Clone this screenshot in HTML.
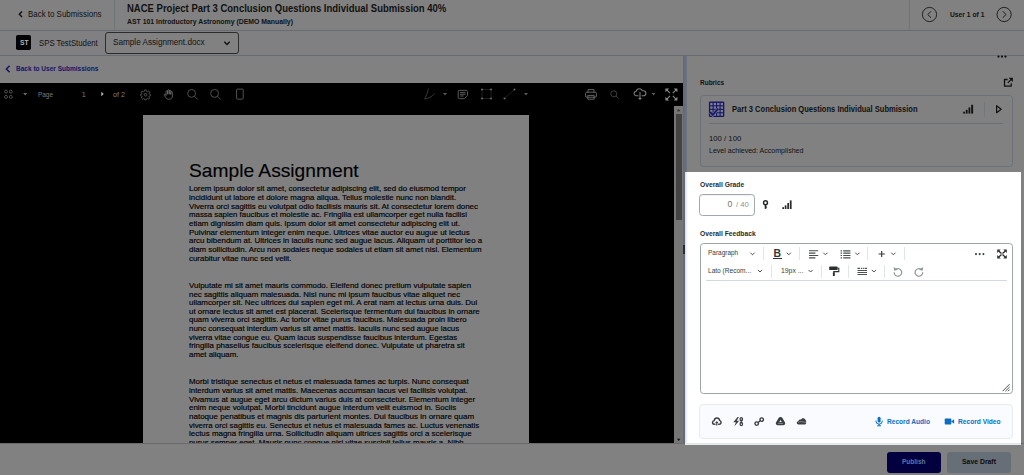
<!DOCTYPE html>
<html><head><meta charset="utf-8"><title>Assignment Evaluation</title>
<style>
html,body{margin:0;padding:0}
body{width:1024px;height:475px;overflow:hidden;position:relative;background:#818181;font-family:"Liberation Sans",sans-serif}
.r{position:absolute;display:block}
.t{position:absolute;white-space:nowrap;line-height:1;display:block;transform-origin:0 0}
</style></head><body>
<div class="r" style="left:0px;top:0px;width:1024px;height:30px;background:#818181"></div>
<div class="r" style="left:0px;top:30px;width:1024px;height:1px;background:#676c73"></div>
<div class="r" style="left:114px;top:0px;width:1px;height:30px;background:#71757a"></div>
<div class="r" style="left:909px;top:0px;width:1px;height:30px;background:#71757a"></div>
<svg class="r" style="left:18px;top:10px;" width="6" height="9" viewBox="0 0 6 9"><g transform="translate(0.000,0.800) scale(1.0000,1.0000)"><path d="M4 0.7 L1.3 3.5 L4 6.3" fill="none" stroke="#111" stroke-width="1.4"/></g></svg>
<span class="t" style="left:28.30px;top:9.10px;font-size:9.5px;transform:scaleX(0.8336);color:#111112;">Back to Submissions</span>
<span class="t" style="left:127.20px;top:3.85px;font-size:10px;transform:scaleX(0.9498);color:#111112;font-weight:700;">NACE Project Part 3 Conclusion Questions Individual Submission 40%</span>
<span class="t" style="left:127.20px;top:18.50px;font-size:6.7px;transform:scaleX(1.0285);color:#111112;font-weight:700;">AST 101 Introductory Astronomy (DEMO Manually)</span>
<svg class="r" style="left:921px;top:6px;" width="18" height="18" viewBox="0 0 18 18"><g transform="translate(0.500,0.500) scale(1.0000,1.0000)"><circle cx="8" cy="8" r="7.1" fill="none" stroke="#1c1c1c" stroke-width="0.95"/><path d="M9.5 4.8 L6.3 8 L9.5 11.2" fill="none" stroke="#1a1a1a" stroke-width="1.0"/></g></svg>
<svg class="r" style="left:996px;top:6px;" width="18" height="18" viewBox="0 0 18 18"><g transform="translate(0.100,0.500) scale(1.0000,1.0000)"><circle cx="8" cy="8" r="7.1" fill="none" stroke="#1c1c1c" stroke-width="0.95"/><path d="M6.7 4.8 L9.9 8 L6.7 11.2" fill="none" stroke="#1a1a1a" stroke-width="1.0"/></g></svg>
<span class="t" style="left:949.80px;top:11.80px;font-size:7.1px;transform:scaleX(0.9475);color:#111112;font-weight:700;">User 1 of 1</span>
<div class="r" style="left:0px;top:31px;width:1024px;height:24px;background:#808082"></div>
<div class="r" style="left:0px;top:55px;width:1024px;height:1px;background:#676c73"></div>
<div class="r" style="left:16px;top:35.2px;width:15.100000000000001px;height:15.0px;background:#030305;border-radius:1.8px"></div>
<span class="t" style="left:19.50px;top:39.05px;font-size:7.6px;transform:scaleX(0.8752);color:#b4b4b4;font-weight:700;">ST</span>
<span class="t" style="left:38.80px;top:38.75px;font-size:9.2px;transform:scaleX(0.8474);color:#111112;">SPS TestStudent</span>
<div class="r" style="left:104.9px;top:32.2px;width:133.7px;height:21.4px;box-sizing:border-box;border:1px solid #2b2c2e;border-radius:3px;background:#818181"></div>
<span class="t" style="left:113.10px;top:38.15px;font-size:8.4px;transform:scaleX(0.9744);color:#111112;">Sample Assignment.docx</span>
<svg class="r" style="left:223px;top:40px;" width="9" height="8" viewBox="0 0 9 8"><g transform="translate(0.000,0.200) scale(1.0000,1.0000)"><path d="M1.3 1.6 L4 4.3 L6.7 1.6" fill="none" stroke="#111" stroke-width="1.4"/></g></svg>
<div class="r" style="left:0px;top:56px;width:683px;height:27px;background:#818181"></div>
<svg class="r" style="left:5px;top:65px;" width="7" height="9" viewBox="0 0 7 9"><g transform="translate(0.000,0.000) scale(1.0000,1.0000)"><path d="M4.6 0.8 L1.4 4 L4.6 7.2" fill="none" stroke="#14146a" stroke-width="1.5"/></g></svg>
<span class="t" style="left:15.80px;top:65.20px;font-size:7.3px;transform:scaleX(0.8937);color:#14146a;font-weight:700;">Back to User Submissions</span>
<div class="r" style="left:0px;top:83px;width:683px;height:361px;background:#000"></div>
<div class="r" style="left:143px;top:115px;width:386px;height:329px;background:#808080"></div>
<svg class="r" style="left:4px;top:89px;" width="10" height="12" viewBox="0 0 10 12"><g transform="translate(0.000,0.300) scale(1.0000,1.0000)"><g fill="none" stroke="#666" stroke-width="0.75"><circle cx="2" cy="2.3" r="1.5"/><circle cx="6.8" cy="2.3" r="1.5"/><circle cx="2" cy="7.6" r="1.5"/><circle cx="6.8" cy="7.6" r="1.5"/></g></g></svg>
<svg class="r" style="left:23px;top:92px;" width="6" height="5" viewBox="0 0 6 5"><g transform="translate(0.200,0.800) scale(1.0000,1.0000)"><path d="M0 0.3 H4 L2 2.6 Z" fill="#6e6e6e"/></g></svg>
<span class="t" style="left:38.30px;top:91.25px;font-size:7.2px;transform:scaleX(0.8920);color:#7c7c7c;">Page</span>
<span class="t" style="left:81.70px;top:91.25px;font-size:7.2px;letter-spacing:0.000px;color:#7c7c7c;">1</span>
<svg class="r" style="left:101px;top:91px;" width="4" height="7" viewBox="0 0 4 7"><g transform="translate(0.000,0.500) scale(1.0000,1.0000)"><path d="M0.3 0.3 L2.7 2.5 L0.3 4.7 Z" fill="#b8b8b8"/></g></svg>
<span class="t" style="left:113.30px;top:91.25px;font-size:7.2px;transform:scaleX(0.9909);color:#7c7c7c;">of 2</span>
<svg class="r" style="left:140px;top:89px;" width="12" height="13" viewBox="0 0 12 13"><g transform="translate(0.000,0.200) scale(1.0000,1.0000)"><g fill="none" stroke="#5e5e5e" stroke-width="0.8"><circle cx="5.5" cy="5.5" r="1.3"/><path d="M4.7 0.7 H6.3 L6.6 2 L7.6 2.5 L8.8 1.8 L9.9 3 L9.1 4.1 L9.4 5 L10.6 5.4 V6.4 L9.3 6.8 L8.9 7.8 L9.6 8.9 L8.5 10 L7.4 9.3 L6.5 9.6 L6.2 10.6 H4.8 L4.5 9.6 L3.6 9.3 L2.5 10 L1.4 8.9 L2.1 7.8 L1.7 6.8 L0.4 6.4 V5.4 L1.6 5 L1.9 4.1 L1.1 3 L2.2 1.8 L3.4 2.5 L4.4 2 Z"/></g></g></svg>
<svg class="r" style="left:163px;top:89px;" width="12" height="12" viewBox="0 0 12 12"><g transform="translate(0.000,0.000) scale(1.0000,1.0000)"><g fill="none" stroke="#6e6e6e" stroke-width="0.8" stroke-linecap="round" stroke-linejoin="round"><path d="M3 6.2 V2.6 a0.8 0.8 0 0 1 1.6 0 V5 M4.6 4.8 V1.6 a0.8 0.8 0 0 1 1.6 0 V5 M6.2 4.8 V2 a0.8 0.8 0 0 1 1.6 0 V5.2 M7.8 5 V3.2 a0.8 0.8 0 0 1 1.6 0 V7 c0 2 -1.2 3.2 -3 3.2 H5.4 C4 10.2 3.4 9.4 2.6 8.2 L1.2 6.2 c-0.4 -0.8 0.6 -1.4 1.2 -0.8 L3 6.2"/></g></g></svg>
<svg class="r" style="left:187px;top:88px;" width="12" height="13" viewBox="0 0 12 13"><g transform="translate(0.000,0.800) scale(1.0000,1.0000)"><g fill="none" stroke="#5c5c5c" stroke-width="0.85"><circle cx="4.6" cy="4.6" r="3.95"/><path d="M7.5 7.5 L10.7 10.7"/></g></g></svg>
<svg class="r" style="left:210px;top:88px;" width="12" height="13" viewBox="0 0 12 13"><g transform="translate(0.000,0.800) scale(1.0000,1.0000)"><g fill="none" stroke="#5c5c5c" stroke-width="0.85"><circle cx="4.6" cy="4.6" r="3.95"/><path d="M7.5 7.5 L10.7 10.7"/></g></g></svg>
<svg class="r" style="left:236px;top:88px;" width="9" height="13" viewBox="0 0 9 13"><g transform="translate(0.000,0.500) scale(1.0000,1.0000)"><rect x="0.6" y="0.6" width="6.6" height="10" rx="0.8" fill="none" stroke="#5a5a5a" stroke-width="0.9"/></g></svg>
<svg class="r" style="left:424px;top:88px;" width="13" height="13" viewBox="0 0 13 13"><g transform="translate(0.000,0.000) scale(1.0000,1.0000)"><path d="M4.6 0.6 C3.6 4.4 2.4 7.6 0.6 11 C4.4 10.6 8 8.8 10.6 5.6" fill="none" stroke="#4a4a4a" stroke-width="0.7"/></g></svg>
<svg class="r" style="left:443px;top:92px;" width="5" height="5" viewBox="0 0 5 5"><g transform="translate(0.000,0.800) scale(1.0000,1.0000)"><path d="M0 0.3 H4 L2 2.6 Z" fill="#5a5a5a"/></g></svg>
<svg class="r" style="left:457px;top:89px;" width="13" height="12" viewBox="0 0 13 12"><g transform="translate(0.800,0.800) scale(0.9455,0.9400)"><g fill="none" stroke="#666" stroke-width="0.95"><path d="M1.6 0.6 H9 a1.2 1.2 0 0 1 1.2 1.2 V6 L7 9.4 H1.6 a1.2 1.2 0 0 1 -1.2 -1.2 V1.8 a1.2 1.2 0 0 1 1.2 -1.2 Z"/><path d="M2.4 3 H8.2 M2.4 4.8 H8.2 M2.4 6.6 H6"/></g></g></svg>
<svg class="r" style="left:481px;top:88px;" width="12" height="13" viewBox="0 0 12 13"><g transform="translate(0.000,0.500) scale(1.0000,1.0000)"><rect x="1" y="1" width="9" height="9" fill="none" stroke="#404040" stroke-width="0.5"/><g fill="#7a7a7a"><rect x="0.2" y="0.2" width="1.6" height="1.6"/><rect x="9.2" y="0.2" width="1.6" height="1.6"/><rect x="0.2" y="9.2" width="1.6" height="1.6"/><rect x="9.2" y="9.2" width="1.6" height="1.6"/></g></g></svg>
<svg class="r" style="left:503px;top:88px;" width="14" height="13" viewBox="0 0 14 13"><g transform="translate(0.500,0.500) scale(1.0000,1.0000)"><path d="M1 10 L11 1" stroke="#424242" stroke-width="0.5"/><g fill="#7a7a7a"><rect x="0.2" y="9.2" width="1.6" height="1.6"/><rect x="10.2" y="0.2" width="1.6" height="1.6"/></g></g></svg>
<svg class="r" style="left:524px;top:92px;" width="5" height="5" viewBox="0 0 5 5"><g transform="translate(0.000,0.800) scale(1.0000,1.0000)"><path d="M0 0.3 H4 L2 2.6 Z" fill="#5a5a5a"/></g></svg>
<svg class="r" style="left:585px;top:88px;" width="13" height="13" viewBox="0 0 13 13"><g transform="translate(0.000,0.800) scale(1.0000,1.0000)"><g fill="none" stroke="#6e6e6e" stroke-width="0.9" stroke-linejoin="round"><path d="M3 3.4 V0.8 H9 V3.4"/><rect x="0.6" y="3.4" width="10.8" height="5" rx="1.2"/><rect x="2.8" y="6.6" width="6.4" height="3.8" fill="#000"/><path d="M2.8 8.4 H9.2"/></g></g></svg>
<svg class="r" style="left:610px;top:90px;" width="10" height="10" viewBox="0 0 10 10"><g transform="translate(0.300,0.300) scale(0.7636,0.7636)"><g fill="none" stroke="#4e4e4e" stroke-width="1.0"><circle cx="4.6" cy="4.6" r="3.95"/><path d="M7.5 7.5 L10.7 10.7"/></g></g></svg>
<svg class="r" style="left:633px;top:88px;" width="15" height="14" viewBox="0 0 15 14"><g transform="translate(0.500,0.200) scale(1.0000,1.0000)"><g fill="none" stroke="#7a7a7a" stroke-width="1.1" stroke-linecap="round" stroke-linejoin="round"><path d="M4.6 7.6 H3.4 C1.6 7.6 0.6 6.4 0.6 5.2 C0.6 3.9 1.6 3 2.8 3 C3 1.6 4.3 0.6 5.9 0.6 C7.3 0.6 8.4 1.4 8.9 2.6 C9.2 2.5 9.5 2.5 9.8 2.5 C11.3 2.5 12.4 3.6 12.4 5 C12.4 6.5 11.3 7.6 9.8 7.6 H8.5"/><path d="M6.5 4.4 V9.8"/></g><path d="M4.4 9.7 H8.6 L6.5 11.9 Z" fill="#7a7a7a"/></g></svg>
<svg class="r" style="left:651px;top:92px;" width="6" height="5" viewBox="0 0 6 5"><g transform="translate(0.500,0.800) scale(1.0000,1.0000)"><path d="M0 0.3 H4 L2 2.6 Z" fill="#5a5a5a"/></g></svg>
<svg class="r" style="left:665px;top:88px;" width="14" height="14" viewBox="0 0 14 14"><g transform="translate(0.200,0.300) scale(1.0333,1.0333)"><g stroke="#8c8c8c" stroke-width="1.0"><path d="M4.6 4.6 L1.6 1.6 M7.4 4.6 L10.4 1.6 M4.6 7.4 L1.6 10.4 M7.4 7.4 L10.4 10.4"/></g><g fill="#8c8c8c"><path d="M0.2 0.2 H3.8 L0.2 3.8 Z M11.8 0.2 H8.2 L11.8 3.8 Z M0.2 11.8 H3.8 L0.2 8.2 Z M11.8 11.8 H8.2 L11.8 8.2 Z"/></g></g></svg>
<div class="r" style="left:674.3px;top:106.3px;width:8.700000000000045px;height:337.7px;background:#767676"></div>
<div class="r" style="left:675.8px;top:114.1px;width:6.100000000000023px;height:105.5px;background:#434343"></div>
<svg class="r" style="left:676px;top:108px;" width="6" height="5" viewBox="0 0 6 5"><g transform="translate(0.800,0.800) scale(1.0000,1.0000)"><path d="M0 2.5 L1.8 0.1 L3.6 2.5 Z" fill="#2e2e2e"/></g></svg>
<svg class="r" style="left:677px;top:438px;" width="5" height="4" viewBox="0 0 5 4"><g transform="translate(0.000,0.600) scale(1.0000,1.0000)"><path d="M0 0.1 L1.7 2.3 L3.4 0.1 Z" fill="#101010"/></g></svg>
<span class="t" style="left:189.20px;top:161.55px;font-size:18.6px;transform:scaleX(1.0323);color:#000;-webkit-text-stroke:0.15px #000;">Sample Assignment</span>
<span class="t" style="left:189.00px;top:184.90px;font-size:7.9px;transform:scaleX(1.0005);color:#000;-webkit-text-stroke:0.16px #000;">Lorem ipsum dolor sit amet, consectetur adipiscing elit, sed do eiusmod tempor</span>
<span class="t" style="left:189.00px;top:193.90px;font-size:7.9px;transform:scaleX(1.0003);color:#000;-webkit-text-stroke:0.16px #000;">incididunt ut labore et dolore magna aliqua. Tellus molestie nunc non blandit.</span>
<span class="t" style="left:189.00px;top:202.90px;font-size:7.9px;transform:scaleX(1.0034);color:#000;-webkit-text-stroke:0.16px #000;">Viverra orci sagittis eu volutpat odio facilisis mauris sit. At consectetur lorem donec</span>
<span class="t" style="left:189.00px;top:210.90px;font-size:7.9px;transform:scaleX(0.9950);color:#000;-webkit-text-stroke:0.16px #000;">massa sapien faucibus et molestie ac. Fringilla est ullamcorper eget nulla facilisi</span>
<span class="t" style="left:189.00px;top:219.90px;font-size:7.9px;transform:scaleX(1.0063);color:#000;-webkit-text-stroke:0.16px #000;">etiam dignissim diam quis. Ipsum dolor sit amet consectetur adipiscing elit ut.</span>
<span class="t" style="left:189.00px;top:228.90px;font-size:7.9px;transform:scaleX(1.0030);color:#000;-webkit-text-stroke:0.16px #000;">Pulvinar elementum integer enim neque. Ultrices vitae auctor eu augue ut lectus</span>
<span class="t" style="left:189.00px;top:236.90px;font-size:7.9px;transform:scaleX(1.0024);color:#000;-webkit-text-stroke:0.16px #000;">arcu bibendum at. Ultrices in iaculis nunc sed augue lacus. Aliquam ut porttitor leo a</span>
<span class="t" style="left:189.00px;top:245.90px;font-size:7.9px;transform:scaleX(0.9997);color:#000;-webkit-text-stroke:0.16px #000;">diam sollicitudin. Arcu non sodales neque sodales ut etiam sit amet nisl. Elementum</span>
<span class="t" style="left:189.00px;top:254.90px;font-size:7.9px;transform:scaleX(1.0028);color:#000;-webkit-text-stroke:0.16px #000;">curabitur vitae nunc sed velit.</span>
<span class="t" style="left:189.00px;top:281.90px;font-size:7.9px;transform:scaleX(1.0047);color:#000;-webkit-text-stroke:0.16px #000;">Vulputate mi sit amet mauris commodo. Eleifend donec pretium vulputate sapien</span>
<span class="t" style="left:189.00px;top:290.90px;font-size:7.9px;transform:scaleX(0.9989);color:#000;-webkit-text-stroke:0.16px #000;">nec sagittis aliquam malesuada. Nisl nunc mi ipsum faucibus vitae aliquet nec</span>
<span class="t" style="left:189.00px;top:298.90px;font-size:7.9px;transform:scaleX(1.0016);color:#000;-webkit-text-stroke:0.16px #000;">ullamcorper sit. Nec ultrices dui sapien eget mi. A erat nam at lectus urna duis. Dui</span>
<span class="t" style="left:189.00px;top:307.90px;font-size:7.9px;transform:scaleX(1.0011);color:#000;-webkit-text-stroke:0.16px #000;">ut ornare lectus sit amet est placerat. Scelerisque fermentum dui faucibus in ornare</span>
<span class="t" style="left:189.00px;top:315.90px;font-size:7.9px;transform:scaleX(1.0002);color:#000;-webkit-text-stroke:0.16px #000;">quam viverra orci sagittis. Ac tortor vitae purus faucibus. Malesuada proin libero</span>
<span class="t" style="left:189.00px;top:324.90px;font-size:7.9px;transform:scaleX(0.9984);color:#000;-webkit-text-stroke:0.16px #000;">nunc consequat interdum varius sit amet mattis. Iaculis nunc sed augue lacus</span>
<span class="t" style="left:189.00px;top:333.90px;font-size:7.9px;transform:scaleX(0.9878);color:#000;-webkit-text-stroke:0.16px #000;">viverra vitae congue eu. Quam lacus suspendisse faucibus interdum. Egestas</span>
<span class="t" style="left:189.00px;top:341.90px;font-size:7.9px;transform:scaleX(1.0002);color:#000;-webkit-text-stroke:0.16px #000;">fringilla phasellus faucibus scelerisque eleifend donec. Vulputate ut pharetra sit</span>
<span class="t" style="left:189.00px;top:350.90px;font-size:7.9px;transform:scaleX(0.9976);color:#000;-webkit-text-stroke:0.16px #000;">amet aliquam.</span>
<span class="t" style="left:189.00px;top:377.90px;font-size:7.9px;transform:scaleX(0.9979);color:#000;-webkit-text-stroke:0.16px #000;">Morbi tristique senectus et netus et malesuada fames ac turpis. Nunc consequat</span>
<span class="t" style="left:189.00px;top:386.90px;font-size:7.9px;transform:scaleX(1.0007);color:#000;-webkit-text-stroke:0.16px #000;">interdum varius sit amet mattis. Maecenas accumsan lacus vel facilisis volutpat.</span>
<span class="t" style="left:189.00px;top:395.90px;font-size:7.9px;transform:scaleX(1.0027);color:#000;-webkit-text-stroke:0.16px #000;">Vivamus at augue eget arcu dictum varius duis at consectetur. Elementum integer</span>
<span class="t" style="left:189.00px;top:403.90px;font-size:7.9px;transform:scaleX(1.0052);color:#000;-webkit-text-stroke:0.16px #000;">enim neque volutpat. Morbi tincidunt augue interdum velit euismod in. Sociis</span>
<span class="t" style="left:189.00px;top:412.90px;font-size:7.9px;transform:scaleX(1.0174);color:#000;-webkit-text-stroke:0.16px #000;">natoque penatibus et magnis dis parturient montes. Dui faucibus in ornare quam</span>
<span class="t" style="left:189.00px;top:421.90px;font-size:7.9px;transform:scaleX(0.9963);color:#000;-webkit-text-stroke:0.16px #000;">viverra orci sagittis eu. Senectus et netus et malesuada fames ac. Luctus venenatis</span>
<span class="t" style="left:189.00px;top:429.90px;font-size:7.9px;transform:scaleX(1.0039);color:#000;-webkit-text-stroke:0.16px #000;">lectus magna fringilla urna. Sollicitudin aliquam ultrices sagittis orci a scelerisque</span>
<span class="t" style="left:189.00px;top:438.90px;font-size:7.9px;transform:scaleX(0.9941);color:#000;-webkit-text-stroke:0.16px #000;">purus semper eget. Mauris nunc congue nisi vitae suscipit tellus mauris a. Nibh</span>
<div class="r" style="left:683px;top:56px;width:4.2000000000000455px;height:388px;background:linear-gradient(90deg,#626976,#6c7280)"></div>
<div class="r" style="left:687.5px;top:56px;width:336.5px;height:388px;background:#818181"></div>
<svg class="r" style="left:997px;top:55px;" width="11" height="5" viewBox="0 0 11 5"><g transform="translate(0.000,0.000) scale(1.0000,1.0000)"><g fill="#101010"><circle cx="1.5" cy="1.6" r="1.15"/><circle cx="5" cy="1.6" r="1.15"/><circle cx="8.5" cy="1.6" r="1.15"/></g></g></svg>
<span class="t" style="left:699.70px;top:79.35px;font-size:7.0px;transform:scaleX(0.9247);color:#111112;font-weight:700;">Rubrics</span>
<svg class="r" style="left:1003px;top:77px;" width="12" height="12" viewBox="0 0 12 12"><g transform="translate(0.600,0.600) scale(1.0000,1.0000)"><g fill="none" stroke="#111" stroke-width="1.3" stroke-linejoin="round"><path d="M4 1.9 H0.9 V8.6 H7.6 V5.6"/><path d="M4.2 5.3 L8.2 1.3"/></g><path d="M5 0.2 H9.3 V4.5 Z" fill="#111"/></g></svg>
<div class="r" style="left:699.5px;top:95.2px;width:313.5px;height:71.89999999999999px;box-sizing:border-box;border:1px solid #6c7178;border-radius:3.5px;background:#818182"></div>
<svg class="r" style="left:708px;top:101px;" width="18" height="17" viewBox="0 0 18 17"><g transform="translate(0.900,0.600) scale(0.9625,0.9625)"><rect x="0" y="0" width="16" height="16" rx="1.3" fill="#15156b"/><g fill="#80808a"><rect x="1.35" y="1.35" width="2.45" height="2.45"/><rect x="1.35" y="4.97" width="2.45" height="2.45"/><rect x="1.35" y="8.59" width="2.45" height="2.45"/><rect x="1.35" y="12.21" width="2.45" height="2.45"/><rect x="4.97" y="1.35" width="2.45" height="2.45"/><rect x="4.97" y="4.97" width="2.45" height="2.45"/><rect x="4.97" y="8.59" width="2.45" height="2.45"/><rect x="4.97" y="12.21" width="2.45" height="2.45"/><rect x="8.59" y="1.35" width="2.45" height="2.45"/><rect x="8.59" y="4.97" width="2.45" height="2.45"/><rect x="8.59" y="8.59" width="2.45" height="2.45"/><rect x="8.59" y="12.21" width="2.45" height="2.45"/><rect x="12.21" y="1.35" width="2.45" height="2.45"/><rect x="12.21" y="4.97" width="2.45" height="2.45"/><rect x="12.21" y="8.59" width="2.45" height="2.45"/><rect x="12.21" y="12.21" width="2.45" height="2.45"/></g><path d="M1.3 11 L4 13.8 L9.4 7.6" fill="none" stroke="#6a6a86" stroke-width="3.2"/><path d="M1.2 10.9 L4 13.8 L9.6 7.4" fill="none" stroke="#15156b" stroke-width="1.7"/></g></svg>
<span class="t" style="left:732.40px;top:105.10px;font-size:8.5px;transform:scaleX(0.8891);color:#111112;font-weight:700;">Part 3 Conclusion Questions Individual Submission</span>
<svg class="r" style="left:963px;top:104px;" width="12" height="11" viewBox="0 0 12 11"><g transform="translate(0.200,0.800) scale(1.0000,0.9778)"><g fill="#121212"><rect x="0" y="7.1" width="1.8" height="1.9"/><rect x="2.6" y="5.2" width="1.8" height="3.8"/><rect x="5.3" y="2.7" width="1.8" height="6.3"/><rect x="8" y="0" width="1.9" height="9"/></g></g></svg>
<div class="r" style="left:984px;top:102px;width:1px;height:15px;background:#74787e"></div>
<svg class="r" style="left:995px;top:104px;" width="8" height="11" viewBox="0 0 8 11"><g transform="translate(0.800,0.800) scale(1.0000,1.0000)"><path d="M0.8 0.9 L5.4 4.4 L0.8 7.9 Z" fill="none" stroke="#111" stroke-width="1.2" stroke-linejoin="round"/></g></svg>
<div class="r" style="left:709px;top:123px;width:294px;height:1px;background:#6c7075"></div>
<span class="t" style="left:709.30px;top:135.15px;font-size:7.4px;transform:scaleX(1.0466);color:#111112;">100 / 100</span>
<span class="t" style="left:709.30px;top:148.45px;font-size:6.8px;transform:scaleX(1.0373);color:#111112;">Level achieved: Accomplished</span>
<div class="r" style="left:684.8px;top:172px;width:336.0px;height:273.4px;background:#fff"></div>
<div class="r" style="left:684.8px;top:172px;width:3.2000000000000455px;height:271px;background:linear-gradient(90deg,#d3dbe6,#eef1f6 55%,#fff)"></div>
<div class="r" style="left:683.4px;top:245px;width:1.5px;height:9px;background:#2a2c33"></div>
<span class="t" style="left:699.80px;top:181.35px;font-size:7px;transform:scaleX(0.9627);color:#2a2c2e;font-weight:700;">Overall Grade</span>
<div class="r" style="left:699.3px;top:194.2px;width:55.700000000000045px;height:21.400000000000006px;box-sizing:border-box;border:1px solid #a2a8ad;border-radius:3.5px;background:#fff;box-shadow:inset 0 1px 1px rgba(0,0,0,.06)"></div>
<span class="t" style="left:727.48px;top:200.00px;font-size:8.7px;letter-spacing:0.000px;color:#6e7376;">0</span>
<span class="t" style="left:736.20px;top:201.15px;font-size:7.4px;transform:scaleX(1.0370);color:#8d9297;">/ 40</span>
<svg class="r" style="left:762px;top:200px;" width="8" height="10" viewBox="0 0 8 10"><g transform="translate(0.600,0.100) scale(1.0000,1.0000)"><circle cx="2.9" cy="2.7" r="1.95" fill="none" stroke="#26282a" stroke-width="1.5"/><path d="M2.9 4.6 V8.8" stroke="#26282a" stroke-width="1.6"/><path d="M2.9 7.0 H4.5" stroke="#26282a" stroke-width="1.0"/></g></svg>
<svg class="r" style="left:782px;top:200px;" width="11" height="10" viewBox="0 0 11 10"><g transform="translate(0.300,0.400) scale(0.9400,0.9556)"><g fill="#2a2b2c"><rect x="0" y="7.1" width="1.8" height="1.9"/><rect x="2.6" y="5.2" width="1.8" height="3.8"/><rect x="5.3" y="2.7" width="1.8" height="6.3"/><rect x="8" y="0" width="1.9" height="9"/></g></g></svg>
<span class="t" style="left:699.80px;top:230.35px;font-size:7px;transform:scaleX(0.9607);color:#2a2c2e;font-weight:700;">Overall Feedback</span>
<div class="r" style="left:699.6px;top:243px;width:313.0px;height:151px;box-sizing:border-box;border:1px solid #9ea4a9;border-radius:3.5px;background:#fff"></div>
<div class="r" style="left:706px;top:280px;width:300.5px;height:1px;background:#d3d9e3"></div>
<span class="t" style="left:707.90px;top:250.40px;font-size:6.9px;transform:scaleX(0.9372);color:#3a3d40;">Paragraph</span>
<svg class="r" style="left:749px;top:252px;" width="8" height="5" viewBox="0 0 8 5"><g transform="translate(0.900,0.100) scale(1.0000,1.0000)"><path d="M0.5 0.6 L2.6 2.7 L4.7 0.6" fill="none" stroke="#4a4d51" stroke-width="1.0"/></g></svg>
<div class="r" style="left:763px;top:247.3px;width:1px;height:13.099999999999966px;background:#dfe5ed"></div>
<span class="t" style="left:773.54px;top:248.65px;font-size:10.4px;letter-spacing:0.000px;color:#34373a;font-weight:700;">B</span>
<div class="r" style="left:773.0px;top:257.8px;width:8.799999999999955px;height:1.0px;background:#34373a"></div>
<svg class="r" style="left:786px;top:252px;" width="7" height="5" viewBox="0 0 7 5"><g transform="translate(0.200,0.100) scale(1.0000,1.0000)"><path d="M0.5 0.6 L2.6 2.7 L4.7 0.6" fill="none" stroke="#4a4d51" stroke-width="1.0"/></g></svg>
<div class="r" style="left:799.2px;top:247.3px;width:1.0px;height:13.099999999999966px;background:#dfe5ed"></div>
<svg class="r" style="left:809px;top:250px;" width="11" height="10" viewBox="0 0 11 10"><g transform="translate(0.000,0.000) scale(1.0000,1.0000)"><path d="M0 0.7 H9.2 M0 3.1 H6.4 M0 5.5 H9.2 M0 7.9 H6.4" stroke="#494c4f" stroke-width="1.15"/></g></svg>
<svg class="r" style="left:822px;top:252px;" width="7" height="5" viewBox="0 0 7 5"><g transform="translate(0.800,0.100) scale(1.0000,1.0000)"><path d="M0.5 0.6 L2.6 2.7 L4.7 0.6" fill="none" stroke="#4a4d51" stroke-width="1.0"/></g></svg>
<svg class="r" style="left:840px;top:250px;" width="12" height="10" viewBox="0 0 12 10"><g transform="translate(0.600,0.000) scale(1.0000,1.0000)"><path d="M2.6 0.8 H9.8 M2.6 3.1 H9.8 M2.6 5.5 H9.8 M2.6 7.8 H9.8" stroke="#494c4f" stroke-width="1.15"/><path d="M0 0.8 H1.4 M0 3.1 H1.4 M0 5.5 H1.4 M0 7.8 H1.4" stroke="#494c4f" stroke-width="1.15"/></g></svg>
<svg class="r" style="left:854px;top:252px;" width="7" height="5" viewBox="0 0 7 5"><g transform="translate(0.800,0.100) scale(1.0000,1.0000)"><path d="M0.5 0.6 L2.6 2.7 L4.7 0.6" fill="none" stroke="#4a4d51" stroke-width="1.0"/></g></svg>
<div class="r" style="left:867.4px;top:247.3px;width:1.0px;height:13.099999999999966px;background:#dfe5ed"></div>
<svg class="r" style="left:878px;top:250px;" width="8" height="9" viewBox="0 0 8 9"><g transform="translate(0.600,0.900) scale(1.0000,1.0000)"><path d="M3.1 0 V6.2 M0 3.1 H6.2" stroke="#34373a" stroke-width="1.15"/></g></svg>
<svg class="r" style="left:890px;top:252px;" width="7" height="5" viewBox="0 0 7 5"><g transform="translate(0.800,0.100) scale(1.0000,1.0000)"><path d="M0.5 0.6 L2.6 2.7 L4.7 0.6" fill="none" stroke="#4a4d51" stroke-width="1.0"/></g></svg>
<div class="r" style="left:903.9px;top:247.3px;width:1.0px;height:13.099999999999966px;background:#dfe5ed"></div>
<svg class="r" style="left:974px;top:252px;" width="12" height="5" viewBox="0 0 12 5"><g transform="translate(0.800,0.900) scale(1.0000,1.0000)"><g fill="#3c4043"><circle cx="1.2" cy="1.2" r="1.05"/><circle cx="4.9" cy="1.2" r="1.05"/><circle cx="8.6" cy="1.2" r="1.05"/></g></g></svg>
<svg class="r" style="left:997px;top:249px;" width="11" height="11" viewBox="0 0 11 11"><g transform="translate(0.200,0.600) scale(1.0000,1.0000)"><g stroke="#2c2f31" stroke-width="1.35"><path d="M4.3 4.0 L1.4 1.3 M5.3 4.0 L8.2 1.3 M4.3 5.0 L1.4 7.7 M5.3 5.0 L8.2 7.7"/></g><g fill="#2c2f31"><path d="M0 0 H3.5 L0 3.5 Z M9.6 0 H6.1 L9.6 3.5 Z M0 9 H3.5 L0 5.5 Z M9.6 9 H6.1 L9.6 5.5 Z"/></g></g></svg>
<span class="t" style="left:707.90px;top:268.40px;font-size:6.9px;transform:scaleX(0.9525);color:#3a3d40;">Lato (Recom...</span>
<svg class="r" style="left:757px;top:269px;" width="7" height="5" viewBox="0 0 7 5"><g transform="translate(0.400,0.300) scale(1.0000,1.0000)"><path d="M0.5 0.6 L2.6 2.7 L4.7 0.6" fill="none" stroke="#4a4d51" stroke-width="1.0"/></g></svg>
<div class="r" style="left:770.6px;top:264.6px;width:1.0px;height:13.199999999999989px;background:#dfe5ed"></div>
<span class="t" style="left:781.00px;top:268.40px;font-size:6.9px;transform:scaleX(0.9898);color:#3a3d40;">19px ...</span>
<svg class="r" style="left:808px;top:269px;" width="7" height="5" viewBox="0 0 7 5"><g transform="translate(0.000,0.300) scale(1.0000,1.0000)"><path d="M0.5 0.6 L2.6 2.7 L4.7 0.6" fill="none" stroke="#4a4d51" stroke-width="1.0"/></g></svg>
<div class="r" style="left:821.2px;top:264.6px;width:1.0px;height:13.199999999999989px;background:#dfe5ed"></div>
<svg class="r" style="left:829px;top:266px;" width="12" height="11" viewBox="0 0 12 11"><g transform="translate(0.200,0.600) scale(1.0000,1.0000)"><rect x="0" y="0" width="8.4" height="3.4" rx="0.6" fill="#2c2f31"/><path d="M8.4 1.7 H9.6 V5 H4.6 V6" fill="none" stroke="#2c2f31" stroke-width="1.1"/><rect x="3.7" y="5.6" width="1.9" height="3.8" fill="#2c2f31"/></g></svg>
<div class="r" style="left:848.2px;top:264.6px;width:1.0px;height:13.199999999999989px;background:#dfe5ed"></div>
<svg class="r" style="left:857px;top:267px;" width="11" height="9" viewBox="0 0 11 9"><g transform="translate(0.500,0.000) scale(1.0000,1.0000)"><path d="M0 3.5 H9.5 M0 5.5 H9.5 M0 7.5 H9.5" fill="none" stroke="#4d5054" stroke-width="1"/><path d="M0 1.4 H2.6 M3.5 1.4 H4.5 M5.2 1.4 H6.4 M7.1 1.4 H9.5" fill="none" stroke="#4d5054" stroke-width="1.3"/></g></svg>
<svg class="r" style="left:871px;top:269px;" width="7" height="5" viewBox="0 0 7 5"><g transform="translate(0.300,0.300) scale(1.0000,1.0000)"><path d="M0.5 0.6 L2.6 2.7 L4.7 0.6" fill="none" stroke="#4a4d51" stroke-width="1.0"/></g></svg>
<div class="r" style="left:884px;top:264.6px;width:1px;height:13.199999999999989px;background:#dfe5ed"></div>
<svg class="r" style="left:893px;top:266px;" width="10" height="11" viewBox="0 0 10 11"><g transform="translate(0.100,0.600) scale(1.0233,1.0217)"><path d="M2.3 2.9 A3.7 3.7 0 1 1 1.0 5.6" fill="none" stroke="#8d9399" stroke-width="1.15"/><path d="M0.5 0.3 L1.1 4.0 L4.5 3.1 Z" fill="#8d9399"/></g></svg>
<svg class="r" style="left:914px;top:266px;" width="11" height="11" viewBox="0 0 11 11"><g transform="translate(0.900,0.600) scale(1.0233,1.0217)"><g transform="translate(8.6,0) scale(-1,1)"><path d="M2.3 2.9 A3.7 3.7 0 1 1 1.0 5.6" fill="none" stroke="#8d9399" stroke-width="1.15"/><path d="M0.5 0.3 L1.1 4.0 L4.5 3.1 Z" fill="#8d9399"/></g></g></svg>
<svg class="r" style="left:1002px;top:383px;" width="9" height="10" viewBox="0 0 9 10"><g transform="translate(0.000,0.600) scale(1.0000,1.0000)"><path d="M0.6 7.6 L7.6 0.6 M3.4 7.6 L7.6 3.4 M6 7.6 L7.6 6" stroke="#3a3d40" stroke-width="0.9"/></g></svg>
<div class="r" style="left:699.3px;top:404.2px;width:313.4000000000001px;height:34.5px;box-sizing:border-box;border:1px solid #e6ebf2;border-radius:4px;background:#f9fbff"></div>
<svg class="r" style="left:711px;top:417px;" width="12" height="10" viewBox="0 0 12 10"><g transform="translate(0.800,0.300) scale(1.0000,1.0000)"><path d="M3.2 6.9 H2.7 C1.5 6.9 0.75 6.1 0.75 5.1 C0.75 4.1 1.5 3.4 2.4 3.3 C2.6 1.8 3.7 0.75 5.1 0.75 C6.5 0.75 7.6 1.8 7.8 3.1 C8.7 3.3 9.25 4 9.25 5 C9.25 6.1 8.4 6.9 7.4 6.9 H6.9" fill="none" stroke="#3c3f42" stroke-width="1.45" stroke-linecap="round"/><path d="M5 8.2 V5" stroke="#3c3f42" stroke-width="1.2"/><path d="M3.3 5.6 L5 3.6 L6.7 5.6 Z" fill="#3c3f42"/></g></svg>
<svg class="r" style="left:733px;top:417px;" width="12" height="11" viewBox="0 0 12 11"><g transform="translate(0.000,0.000) scale(1.0000,1.0000)"><path d="M4.6 0 L0.3 5.3 H2.9 L1.5 9.2 L6.2 3.7 H3.7 L5.9 0 Z" fill="#3c3f42"/><g fill="none" stroke="#3c3f42" stroke-width="1.25"><rect x="7.15" y="0.65" width="2.3" height="3.3" rx="1.15"/><rect x="7.15" y="5.25" width="2.3" height="3.3" rx="1.15"/></g><path d="M8.3 2.6 V6.6" stroke="#3c3f42" stroke-width="1.1"/></g></svg>
<svg class="r" style="left:754px;top:417px;" width="12" height="11" viewBox="0 0 12 11"><g transform="translate(0.200,0.100) scale(1.0000,1.0000)"><g fill="none" stroke="#3c3f42" stroke-width="1.45"><circle cx="2.5" cy="6.5" r="1.75"/><circle cx="7.5" cy="2.5" r="1.75"/><path d="M3.9 5.4 L6.1 3.6"/></g></g></svg>
<svg class="r" style="left:775px;top:417px;" width="12" height="10" viewBox="0 0 12 10"><g transform="translate(0.700,0.100) scale(1.0000,1.0000)"><path d="M4.8 0 C3.7 0 3.2 0.5 2.6 1.5 L0.4 5.2 C-0.5 6.7 0.5 8.2 2.2 8.2 H7.4 C9.1 8.2 10.1 6.7 9.2 5.2 L7 1.5 C6.4 0.5 5.9 0 4.8 0 Z" fill="#3c3f42"/><path d="M4.8 3.0 L6.0 5.0 H3.6 Z" fill="#f9fbff"/><path d="M2.4 6.3 H7.2" stroke="#c9ccd0" stroke-width="0.55"/></g></svg>
<svg class="r" style="left:796px;top:418px;" width="12" height="8" viewBox="0 0 12 8"><g transform="translate(0.800,0.200) scale(1.0000,1.0000)"><path d="M1.7 6.2 C0.7 6.2 0 5.5 0 4.6 C0 3.8 0.6 3.1 1.5 3 C1.7 2 2.6 1.3 3.6 1.3 C3.8 1.3 4 1.3 4.2 1.4 C4.7 0.5 5.5 0 6.4 0 C7.6 0 8.5 0.8 8.7 1.9 C9.1 2.2 9.4 2.7 9.4 3.3 C9.4 3.6 9.3 3.9 9.2 4.1 C9.3 4.3 9.4 4.6 9.4 4.9 C9.4 5.6 8.8 6.2 8 6.2 Z" fill="#3c3f42"/><path d="M1.4 4.3 C3 3 5 3.2 9.3 4.4" fill="none" stroke="#c9ccd0" stroke-width="0.5"/></g></svg>
<svg class="r" style="left:875px;top:416px;" width="9" height="12" viewBox="0 0 9 12"><g transform="translate(0.200,0.800) scale(1.0000,1.0000)"><rect x="2.4" y="0" width="3" height="5.6" rx="1.5" fill="#0a6fc2"/><path d="M0.7 3.8 V4.2 a3.2 3.2 0 0 0 6.4 0 V3.8" fill="none" stroke="#0a6fc2" stroke-width="1"/><path d="M3.9 7.2 V9 M2 9 H5.8" stroke="#0a6fc2" stroke-width="1"/></g></svg>
<span class="t" style="left:887.30px;top:418.05px;font-size:7.6px;transform:scaleX(0.8680);color:#0a6fc2;font-weight:700;">Record Audio</span>
<svg class="r" style="left:944px;top:418px;" width="12" height="8" viewBox="0 0 12 8"><g transform="translate(0.700,0.600) scale(0.9792,0.9667)"><rect x="0" y="0" width="6.8" height="6" rx="0.9" fill="#0a6fc2"/><path d="M6.6 3 L9.6 0.6 V5.4 Z" fill="#0a6fc2"/></g></svg>
<span class="t" style="left:957.50px;top:418.05px;font-size:7.6px;transform:scaleX(0.8720);color:#0a6fc2;font-weight:700;">Record Video</span>
<div class="r" style="left:0px;top:444px;width:1024px;height:31px;background:#818181"></div>
<div class="r" style="left:0px;top:443.2px;width:684.8px;height:1.0px;background:#6a6a6a"></div>
<div class="r" style="left:1020.8px;top:443.2px;width:3.2000000000000455px;height:1.0px;background:#6a6a6a"></div>
<div class="r" style="left:684.8px;top:443px;width:336.0px;height:1.1999999999999886px;background:#e3e6e8"></div>
<div class="r" style="left:684.8px;top:444.2px;width:336.0px;height:1.1999999999999886px;background:linear-gradient(#fbfbfb,#d8d8d8)"></div>
<div class="r" style="left:886.8px;top:452px;width:54.0px;height:21px;background:#030040;border-radius:3px"></div>
<span class="t" style="left:902.30px;top:458.00px;font-size:7.7px;transform:scaleX(0.8451);color:#66749e;font-weight:700;">Publish</span>
<div class="r" style="left:947px;top:452px;width:64.39999999999998px;height:21px;background:#666e78;border-radius:3px"></div>
<span class="t" style="left:962.00px;top:458.00px;font-size:7.7px;transform:scaleX(0.8926);color:#0c0c0d;font-weight:700;">Save Draft</span>
</body></html>
